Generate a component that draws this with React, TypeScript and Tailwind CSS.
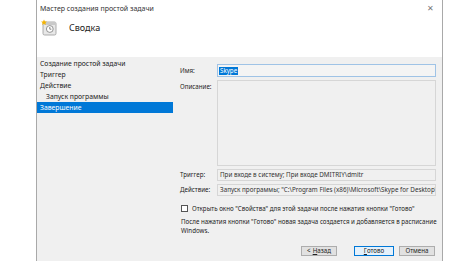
import React from "react";

const font = { fontFamily: '"Noto Sans", "Liberation Sans", sans-serif' };

function TaskIcon() {
  return (
    <svg width="17" height="17" viewBox="0 0 17 17">
      <rect x="2" y="3" width="13" height="13" rx="1.5" fill="#e8e8e8" stroke="#9a9a9a" strokeWidth="0.8" />
      <rect x="2" y="3" width="13" height="3" fill="#c9c9c9" />
      <circle cx="8.8" cy="10" r="3.4" fill="#fff" stroke="#7a7a7a" strokeWidth="0.8" />
      <path d="M8.8 8v2.2h1.6" stroke="#555" strokeWidth="0.7" fill="none" />
      <path d="M3 0.5l0.9 1.9 2 0.2-1.5 1.3 0.5 2-1.9-1.1-1.9 1.1 0.5-2L0.1 2.6l2-0.2z" fill="#f5b400" />
    </svg>
  );
}

function NavItem({ label, active, indent }: { label: string; active?: boolean; indent?: boolean }) {
  return (
    <div
      className={`h-[11px] leading-[11px] text-[6.8px] ${indent ? "pl-[9px]" : "pl-[3px]"} ${
        active ? "bg-[#0078d7] text-white" : "text-[#222]"
      }`}
    >
      {label}
    </div>
  );
}

function Field({ label, value }: { label: string; value: string }) {
  return (
    <div className="flex items-center">
      <div className="w-[37px] shrink-0 text-[6.2px] text-[#222]">{label}</div>
      <div className="flex h-[12px] min-w-0 flex-1 items-center overflow-hidden whitespace-nowrap border border-[#d6d6d6] bg-[#f0f0f0] pl-[2px] text-[6.3px] text-[#333]">
        {value}
      </div>
    </div>
  );
}

function Btn({ children, primary }: { children: React.ReactNode; primary?: boolean }) {
  return (
    <div
      className={`flex h-[10px] items-center justify-center border text-[6.2px] text-[#222] ${
        primary ? "w-[40px] border-[#0078d7] bg-[#e5f1fb]" : "w-[36px] border-[#adadad] bg-[#e1e1e1]"
      }`}
    >
      {children}
    </div>
  );
}

export default function App() {
  return (
    <div className="flex h-[261px] w-[474px] bg-white" style={font}>
      <div className="ml-[36px] flex h-[261px] w-[407px] flex-col border-x border-[#a9a9a9]">
        {/* header */}
        <div className="relative h-[57px] shrink-0 bg-white pl-[3px]">
          <div className="pt-[4px] text-[7px] leading-[9px] text-[#333]">Мастер создания простой задачи</div>
          <div className="mt-[6px] flex items-center gap-[11px] pl-[1px]">
            <TaskIcon />
            <span className="text-[9px] text-[#222]">Сводка</span>
          </div>
          <span className="absolute right-[8px] top-[2px] text-[8px] text-[#777]">✕</span>
        </div>

        {/* body */}
        <div className="flex flex-1 bg-[#f0f0f0]">
          <div className="w-[136px] shrink-0 pt-[1px]">
            <NavItem label="Создание простой задачи" />
            <NavItem label="Триггер" />
            <NavItem label="Действие" />
            <NavItem label="Запуск программы" indent />
            <NavItem label="Завершение" active />
          </div>

          <div className="flex min-w-0 flex-1 flex-col pl-[7px] pr-[6px] pt-[7px]">
            <div className="flex items-center">
              <div className="w-[37px] shrink-0 text-[6.2px] text-[#222]">Имя:</div>
              <div className="flex h-[13px] flex-1 items-center border border-[#9fc3e6] bg-[#f4f4f4] pl-[1px]">
                <span className="bg-[#0078d7] px-[1px] text-[6.2px] leading-[8px] text-white">Skype</span>
              </div>
            </div>
            <div className="mt-[3px] flex">
              <div className="w-[37px] shrink-0 pt-[2px] text-[6.2px] text-[#222]">Описание:</div>
              <div className="h-[86px] flex-1 border border-[#d6d6d6] bg-[#f0f0f0]" />
            </div>
            <div className="mt-[3px] flex flex-col gap-[3px]">
              <Field label="Триггер:" value="При входе в систему; При входе DMITRIY\dmitr" />
              <Field label="Действие:" value={'Запуск программы; "C:\\Program Files (x86)\\Microsoft\\Skype for Desktop\\Skype.exe"'} />
            </div>
            <div className="mt-[8px] flex items-center gap-[4px] pl-[1px]">
              <div className="h-[7px] w-[7px] border border-[#555] bg-white" />
              <span className="text-[6.2px] text-[#222]">
                Открыть окно "Свойства" для этой задачи после нажатия кнопки "Готово"
              </span>
            </div>
            <div className="mt-[4px] pl-[1px] text-[6.2px] leading-[9px] text-[#222]">
              <div className="whitespace-nowrap">
                После нажатия кнопки "Готово" новая задача создается и добавляется в расписание
              </div>
              <div>Windows.</div>
            </div>
            <div className="mt-auto mb-[5px] flex justify-end gap-[5px] pr-[1px]">
              <Btn>
                {"< "}
                <span className="ml-[2px] underline">Н</span>азад
              </Btn>
              <div className="w-[7px]" />
              <Btn primary>
                <span className="underline">Г</span>отово
              </Btn>
              <Btn>Отмена</Btn>
            </div>
          </div>
        </div>
      </div>
    </div>
  );
}
